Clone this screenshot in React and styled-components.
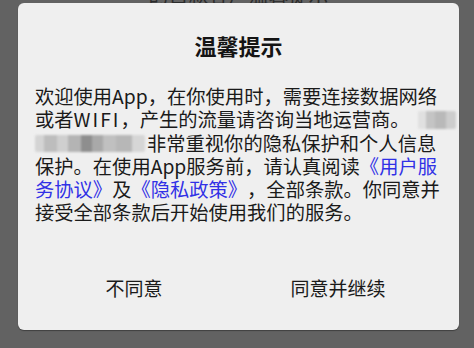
import React from 'react'
import styled, { createGlobalStyle } from 'styled-components'

const GlobalStyle = createGlobalStyle`
  body {
    margin: 0;
    background: #626262;
    font-family: "Noto Sans CJK SC", "Noto Sans", sans-serif;
  }
`

const Screen = styled.div`
  width: 474px;
  height: 348px;
  background: #626262;
  overflow: hidden;
  display: flex;
  flex-direction: column;
  align-items: flex-start;
  padding-left: 18px;
  box-sizing: border-box;
`

const Peek = styled.div`
  width: 441px;
  height: 3px;
  overflow: hidden;
  display: flex;
  justify-content: center;
  align-items: flex-end;
  font-size: 20px;
  line-height: 17px;
  color: #2b2b2b;
`

const Dialog = styled.div`
  width: 441px;
  height: 327px;
  background: #efefef;
  border-radius: 6px;
  box-shadow: 0 1px 1px rgba(0, 0, 0, 0.35);
  display: flex;
  flex-direction: column;
`

const Title = styled.h2`
  margin: 0;
  padding-top: 27px;
  font-size: 22px;
  line-height: 30px;
  font-weight: 700;
  text-align: center;
  color: #141414;
`

const Body = styled.div`
  margin-top: 25px;
  padding-left: 17px;
  font-size: 19.3px;
  line-height: 23.3px;
  color: #1a1a1a;
  white-space: nowrap;
`

const Line = styled.div`
  display: flex;
  align-items: center;
  height: 23.3px;
`

const Latin = styled.span`
  letter-spacing: ${p => p.spread || 0}px;
`

const Link = styled.span`
  color: #3131e6;
`

const Mosaic = styled.span`
  display: inline-block;
  flex-shrink: 0;
  width: ${p => p.w}px;
  height: ${p => p.h}px;
  margin-left: ${p => p.ml || 0}px;
  margin-right: ${p => p.mr || 0}px;
  background: ${p => p.dark
    ? 'linear-gradient(90deg, #d4d4d4 0 8%, #bdbdbd 8% 20%, #cfcfcf 20% 30%, #b4b4b4 30% 42%, #8e8e8e 42% 52%, #a9a9a9 52% 62%, #c0c0c0 62% 74%, #b7b7b7 74% 88%, #d6d6d6 88% 100%)'
    : 'linear-gradient(90deg, #e0e0e0 0 20%, #c4c4c4 20% 45%, #b9b9b9 45% 75%, #cdcdcd 75% 100%)'};
  filter: blur(1.2px);
  border-radius: 2px;
`

const ButtonRow = styled.div`
  margin-top: auto;
  display: flex;
  padding: 0 19px 19px 14px;
`

const Button = styled.button`
  flex: 1;
  height: 48px;
  border: none;
  background: transparent;
  font-family: inherit;
  font-size: 19px;
  color: #1a1a1a;
  cursor: pointer;
`

export default function App() {
  return (
    <>
      <GlobalStyle />
      <Screen>
        <Peek>的首款客户温馨提示</Peek>
        <Dialog>
          <Title>温馨提示</Title>
          <Body>
            <Line>欢迎使用App，在你使用时，需要连接数据网络</Line>
            <Line>
              或者<Latin spread={2}>WIFI</Latin>，产生的流量请咨询当地运营商。
              <Mosaic w={38} h={18} ml={8} />
            </Line>
            <Line>
              <Mosaic dark w={110} h={17} mr={2} />
              非常重视你的隐私保护和个人信息
            </Line>
            <Line>
              保护。在使用App服务前，请认真阅读<Link>《用户服</Link>
            </Line>
            <Line>
              <Link>务协议》</Link>及<Link>《隐私政策》</Link>，全部条款。你同意并
            </Line>
            <Line>接受全部条款后开始使用我们的服务。</Line>
          </Body>
          <ButtonRow>
            <Button>不同意</Button>
            <Button>同意并继续</Button>
          </ButtonRow>
        </Dialog>
      </Screen>
    </>
  )
}
